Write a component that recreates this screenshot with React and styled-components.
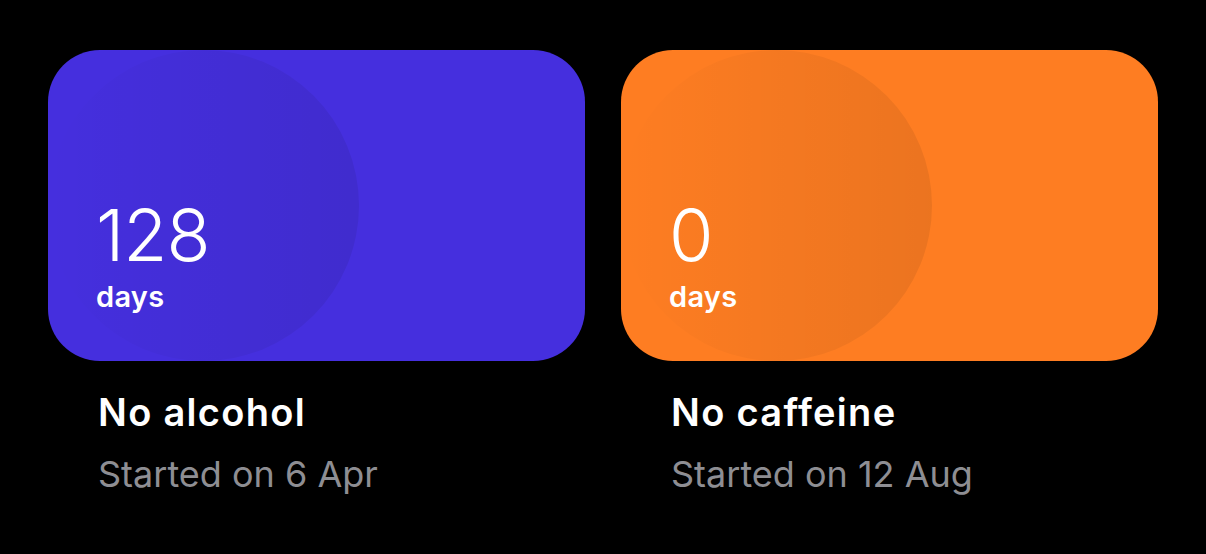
import styled, { createGlobalStyle } from "styled-components";

const GlobalStyle = createGlobalStyle`
  html, body {
    margin: 0;
    padding: 0;
    background: #000;
  }
  body {
    font-family: Inter, "Noto Sans", "Liberation Sans", sans-serif;
    -webkit-font-smoothing: antialiased;
  }
`;

const streaks = [
  { id: 1, count: 128, title: "No alcohol", started: "6 Apr", color: "#452fde" },
  { id: 2, count: 0, title: "No caffeine", started: "12 Aug", color: "#fe7d22" },
];

export default function App() {
  return (
    <>
      <GlobalStyle />
      <Grid>
        {streaks.map((s) => (
          <Streak key={s.id}>
            <Card $color={s.color}>
              <Blob />
              <Count>{s.count}</Count>
              <Unit>days</Unit>
            </Card>
            <Title>{s.title}</Title>
            <Started>Started on {s.started}</Started>
          </Streak>
        ))}
      </Grid>
    </>
  );
}

const Grid = styled.div`
  display: grid;
  grid-template-columns: 537px 537px;
  column-gap: 36px;
  padding: 50px 48px 0;
  min-height: 554px;
  box-sizing: border-box;
  background: #000;
`;

const Streak = styled.div`
  display: flex;
  flex-direction: column;
`;

const Card = styled.div`
  position: relative;
  overflow: hidden;
  height: 311px;
  border-radius: 52px;
  background: ${(p) => p.$color};
  display: flex;
  flex-direction: column;
  justify-content: flex-end;
  padding: 0 48px 47px;
  box-sizing: border-box;
  color: #fff;
`;

// soft shaded disc on the left half of the card
const Blob = styled.div`
  position: absolute;
  top: 0;
  left: 0;
  width: 311px;
  height: 311px;
  border-radius: 50%;
  background: linear-gradient(90deg, rgba(0, 0, 0, 0) 0%, rgba(0, 0, 0, 0.075) 100%);
`;

const Count = styled.div`
  position: relative;
  font-size: 72px;
  font-weight: 300;
  line-height: 72px;
  letter-spacing: -1px;
`;

const Unit = styled.div`
  position: relative;
  font-size: 29px;
  font-weight: 600;
  line-height: 34px;
  letter-spacing: 0.3px;
  margin-top: 9px;
`;

const Title = styled.div`
  margin: 28px 0 0 50px;
  font-size: 38px;
  font-weight: 600;
  line-height: 46px;
  letter-spacing: 1.3px;
  color: #fff;
`;

const Started = styled.div`
  margin: 17px 0 0 50px;
  font-size: 36px;
  font-weight: 400;
  line-height: 44px;
  color: #8e8e93;
`;
